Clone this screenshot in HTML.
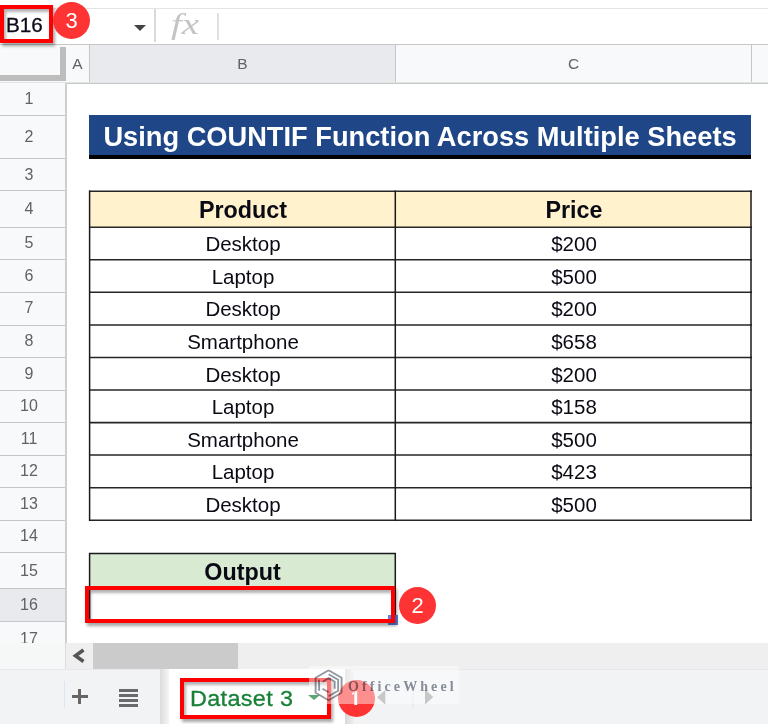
<!DOCTYPE html>
<html><head><meta charset="utf-8">
<style>
html,body{margin:0;padding:0;}
body{width:768px;height:724px;position:relative;overflow:hidden;background:#fff;font-family:"Liberation Sans",sans-serif;}
.a{position:absolute;}
.hl{position:absolute;height:1px;background:#c4c7c5;}
.vl{position:absolute;width:1px;background:#c4c7c5;}
.rh{position:absolute;left:0;width:58px;text-align:center;font-size:16px;color:#5f6368;}
.ch{position:absolute;top:44.8px;height:37px;line-height:37px;text-align:center;font-size:15.5px;color:#5f6368;}
.cell{position:absolute;text-align:center;font-size:20.5px;color:#0a0a14;white-space:nowrap;}
.redbox{position:absolute;box-sizing:border-box;border:4px solid #ff0000;box-shadow:2px 3px 3px rgba(0,0,0,.35), inset 2px 3px 3px rgba(0,0,0,.3);}
.circ{position:absolute;width:37px;height:37px;border-radius:50%;background:#fe3434;color:#fff;text-align:center;font-size:22px;line-height:37px;}
</style></head><body>
<div class="hl" style="left:0;top:8px;width:768px;background:#e3e3e3;"></div>
<div class="hl" style="left:0;top:44px;width:768px;background:#c7c7c7;"></div>
<div class="a" style="left:6px;top:12px;font-size:20.7px;line-height:26px;color:#0b0b1a;-webkit-text-stroke:0.3px #0b0b1a;">B16</div>
<div class="a" style="left:133.5px;top:24.5px;width:0;height:0;border-left:6px solid transparent;border-right:6px solid transparent;border-top:6.5px solid #444;"></div>
<div class="a" style="left:154px;top:9px;width:2px;height:33px;background:#d9d9d9;"></div>
<div class="a" style="left:171px;top:6px;font-family:'Liberation Serif',serif;font-style:italic;font-size:30px;line-height:36px;color:#c4c4c4;transform:scaleX(1.3);transform-origin:0 0;">fx</div>
<div class="a" style="left:217px;top:13px;width:2px;height:27px;background:#e0e0e0;"></div>
<div class="a" style="left:0;top:45px;width:768px;height:37px;background:#f8f9fa;"></div>
<div class="a" style="left:90px;top:45px;width:305px;height:37px;background:#e8eaed;"></div>
<div class="a" style="left:60px;top:46.5px;width:6px;height:34px;background:#bdbdbd;"></div>
<div class="a" style="left:0;top:75px;width:66px;height:6px;background:#bdbdbd;"></div>
<div class="hl" style="left:0;top:82px;width:768px;background:#e2e4e4;"></div>
<div class="hl" style="left:0;top:83px;width:768px;background:#c8caca;"></div>
<div class="vl" style="left:89px;top:45px;height:37px;"></div>
<div class="vl" style="left:395px;top:45px;height:37px;"></div>
<div class="vl" style="left:751px;top:45px;height:37px;"></div>
<div class="ch" style="left:66px;width:23px;">A</div>
<div class="ch" style="left:90px;width:305px;">B</div>
<div class="ch" style="left:396px;width:355px;">C</div>
<div class="a" style="left:0;top:83px;width:65px;height:560px;background:#f8f9fa;"></div>
<div class="a" style="left:0;top:589px;width:65px;height:32px;background:#e8eaed;"></div>
<div class="vl" style="left:65px;top:83px;height:560px;width:2px;background:#cdd0cf;"></div>
<div class="hl" style="left:0;top:115px;width:65px;"></div>
<div class="rh" style="top:82.7px;height:32.7px;line-height:32.7px;">1</div>
<div class="hl" style="left:0;top:158px;width:65px;"></div>
<div class="rh" style="top:115.4px;height:43.099999999999994px;line-height:43.099999999999994px;">2</div>
<div class="hl" style="left:0;top:190px;width:65px;"></div>
<div class="rh" style="top:158.5px;height:32.0px;line-height:32.0px;">3</div>
<div class="hl" style="left:0;top:227px;width:65px;"></div>
<div class="rh" style="top:190.5px;height:36.900000000000006px;line-height:36.900000000000006px;">4</div>
<div class="hl" style="left:0;top:259px;width:65px;"></div>
<div class="rh" style="top:227.4px;height:32.400000000000006px;line-height:32.400000000000006px;">5</div>
<div class="hl" style="left:0;top:292px;width:65px;"></div>
<div class="rh" style="top:259.8px;height:32.5px;line-height:32.5px;">6</div>
<div class="hl" style="left:0;top:325px;width:65px;"></div>
<div class="rh" style="top:292.3px;height:32.69999999999999px;line-height:32.69999999999999px;">7</div>
<div class="hl" style="left:0;top:357px;width:65px;"></div>
<div class="rh" style="top:325px;height:32.5px;line-height:32.5px;">8</div>
<div class="hl" style="left:0;top:390px;width:65px;"></div>
<div class="rh" style="top:357.5px;height:32.80000000000001px;line-height:32.80000000000001px;">9</div>
<div class="hl" style="left:0;top:422px;width:65px;"></div>
<div class="rh" style="top:390.3px;height:32.30000000000001px;line-height:32.30000000000001px;">10</div>
<div class="hl" style="left:0;top:455px;width:65px;"></div>
<div class="rh" style="top:422.6px;height:32.39999999999998px;line-height:32.39999999999998px;">11</div>
<div class="hl" style="left:0;top:487px;width:65px;"></div>
<div class="rh" style="top:455px;height:32.80000000000001px;line-height:32.80000000000001px;">12</div>
<div class="hl" style="left:0;top:520px;width:65px;"></div>
<div class="rh" style="top:487.8px;height:32.49999999999994px;line-height:32.49999999999994px;">13</div>
<div class="hl" style="left:0;top:552px;width:65px;"></div>
<div class="rh" style="top:520.3px;height:32.40000000000009px;line-height:32.40000000000009px;">14</div>
<div class="hl" style="left:0;top:588px;width:65px;"></div>
<div class="rh" style="top:552.7px;height:36.19999999999993px;line-height:36.19999999999993px;">15</div>
<div class="hl" style="left:0;top:621px;width:65px;"></div>
<div class="rh" style="top:588.9px;height:32.700000000000045px;line-height:32.700000000000045px;">16</div>
<div class="hl" style="left:0;top:660px;width:65px;"></div>
<div class="rh" style="top:621.6px;height:33.89999999999998px;line-height:33.89999999999998px;">17</div>
<div class="a" style="left:89px;top:115px;width:662px;height:40px;background:#1f4788;color:#fff;"></div>
<div class="a" style="left:89px;top:117px;width:662px;height:40px;color:#fff;font-weight:bold;font-size:28px;line-height:40px;text-align:center;white-space:nowrap;transform:scaleX(0.973);">Using COUNTIF Function Across Multiple Sheets</div>
<div class="a" style="left:89px;top:155px;width:662px;height:4px;background:#000;"></div>
<div class="a" style="left:89px;top:190.5px;width:662px;height:37px;background:#fff2cc;"></div>
<div class="cell" style="left:90px;top:190.5px;width:306px;height:36.900000000000006px;line-height:36.900000000000006px;font-weight:bold;font-size:23.3px;padding-top:1px;">Product</div>
<div class="cell" style="left:396px;top:190.5px;width:356px;height:36.900000000000006px;line-height:36.900000000000006px;font-weight:bold;font-size:23.3px;padding-top:1px;">Price</div>
<div class="cell" style="left:90px;top:227.4px;width:306px;height:32.400000000000006px;line-height:32.400000000000006px;padding-top:1px;">Desktop</div>
<div class="cell" style="left:396px;top:227.4px;width:356px;height:32.400000000000006px;line-height:32.400000000000006px;padding-top:1px;">$200</div>
<div class="cell" style="left:90px;top:259.8px;width:306px;height:32.5px;line-height:32.5px;padding-top:1px;">Laptop</div>
<div class="cell" style="left:396px;top:259.8px;width:356px;height:32.5px;line-height:32.5px;padding-top:1px;">$500</div>
<div class="cell" style="left:90px;top:292.3px;width:306px;height:32.69999999999999px;line-height:32.69999999999999px;padding-top:1px;">Desktop</div>
<div class="cell" style="left:396px;top:292.3px;width:356px;height:32.69999999999999px;line-height:32.69999999999999px;padding-top:1px;">$200</div>
<div class="cell" style="left:90px;top:325px;width:306px;height:32.5px;line-height:32.5px;padding-top:1px;">Smartphone</div>
<div class="cell" style="left:396px;top:325px;width:356px;height:32.5px;line-height:32.5px;padding-top:1px;">$658</div>
<div class="cell" style="left:90px;top:357.5px;width:306px;height:32.80000000000001px;line-height:32.80000000000001px;padding-top:1px;">Desktop</div>
<div class="cell" style="left:396px;top:357.5px;width:356px;height:32.80000000000001px;line-height:32.80000000000001px;padding-top:1px;">$200</div>
<div class="cell" style="left:90px;top:390.3px;width:306px;height:32.30000000000001px;line-height:32.30000000000001px;padding-top:1px;">Laptop</div>
<div class="cell" style="left:396px;top:390.3px;width:356px;height:32.30000000000001px;line-height:32.30000000000001px;padding-top:1px;">$158</div>
<div class="cell" style="left:90px;top:422.6px;width:306px;height:32.39999999999998px;line-height:32.39999999999998px;padding-top:1px;">Smartphone</div>
<div class="cell" style="left:396px;top:422.6px;width:356px;height:32.39999999999998px;line-height:32.39999999999998px;padding-top:1px;">$500</div>
<div class="cell" style="left:90px;top:455px;width:306px;height:32.80000000000001px;line-height:32.80000000000001px;padding-top:1px;">Laptop</div>
<div class="cell" style="left:396px;top:455px;width:356px;height:32.80000000000001px;line-height:32.80000000000001px;padding-top:1px;">$423</div>
<div class="cell" style="left:90px;top:487.8px;width:306px;height:32.49999999999994px;line-height:32.49999999999994px;padding-top:1px;">Desktop</div>
<div class="cell" style="left:396px;top:487.8px;width:356px;height:32.49999999999994px;line-height:32.49999999999994px;padding-top:1px;">$500</div>
<svg class="a" style="left:0;top:0" width="768" height="724"><line x1="89" y1="191.2" x2="752" y2="191.2" stroke="#262626" stroke-width="1.6"/><line x1="89" y1="227.3" x2="752" y2="227.3" stroke="#262626" stroke-width="1.6"/><line x1="89" y1="259.8" x2="752" y2="259.8" stroke="#262626" stroke-width="1.6"/><line x1="89" y1="292.3" x2="752" y2="292.3" stroke="#262626" stroke-width="1.6"/><line x1="89" y1="325" x2="752" y2="325" stroke="#262626" stroke-width="1.6"/><line x1="89" y1="357.5" x2="752" y2="357.5" stroke="#262626" stroke-width="1.6"/><line x1="89" y1="390" x2="752" y2="390" stroke="#262626" stroke-width="1.6"/><line x1="89" y1="422.6" x2="752" y2="422.6" stroke="#262626" stroke-width="1.6"/><line x1="89" y1="455" x2="752" y2="455" stroke="#262626" stroke-width="1.6"/><line x1="89" y1="487.8" x2="752" y2="487.8" stroke="#262626" stroke-width="1.6"/><line x1="89" y1="520.3" x2="752" y2="520.3" stroke="#262626" stroke-width="1.6"/><line x1="89.6" y1="190.4" x2="89.6" y2="521.1" stroke="#1a1a1a" stroke-width="1.5"/><line x1="395.3" y1="190.4" x2="395.3" y2="521.1" stroke="#1a1a1a" stroke-width="1.5"/><line x1="751" y1="190.4" x2="751" y2="521.1" stroke="#1a1a1a" stroke-width="1.5"/></svg>
<div class="a" style="left:89px;top:553px;width:306px;height:36px;background:#d9ead3;"></div>
<svg class="a" style="left:0;top:0" width="768" height="724"><path d="M89.6 621.6 V553.6 H395.3 V621.6 Z M89.6 589 H395.3" fill="none" stroke="#1a1a1a" stroke-width="1.5"/></svg>
<div class="cell" style="left:89.5px;top:553.8px;width:306px;height:36px;line-height:36px;font-weight:bold;font-size:23.3px;">Output</div>
<div class="a" style="left:388px;top:615px;width:10px;height:10px;background:#5b80e0;"></div>
<div class="redbox" style="left:85px;top:586px;width:310px;height:37px;"></div>
<div class="circ" style="left:399px;top:587px;">2</div>
<div class="redbox" style="left:0;top:5px;width:52.5px;height:38px;"></div>
<div class="circ" style="left:53px;top:2px;">3</div>
<div class="a" style="left:0;top:643px;width:768px;height:26px;background:#efefef;"></div>
<div class="a" style="left:0;top:643px;width:65px;height:26px;background:#f6f8f8;"></div>
<div class="a" style="left:65px;top:643px;width:1px;height:26px;background:#dcdcdc;"></div>
<div class="a" style="left:66px;top:643px;width:27px;height:26px;background:#efefef;"></div>
<div class="a" style="left:93px;top:643px;width:145px;height:26px;background:#cbcbcb;"></div>
<svg class="a" style="left:0;top:0" width="768" height="724"><path d="M83.5 650 L75.5 655.8 L83.5 661.5" fill="none" stroke="#555" stroke-width="3.6" stroke-linejoin="miter"/></svg>
<div class="a" style="left:0;top:669px;width:768px;height:55px;background:#f1f3f4;"></div>
<div class="a" style="left:0;top:669px;width:768px;height:1px;background:#e6e8eb;"></div>
<div class="a" style="left:160px;top:669px;width:9px;height:55px;background:linear-gradient(to right,#dcdcdc,#f5f5f5);"></div>
<div class="a" style="left:169px;top:669px;width:176px;height:55px;background:#fff;"></div>
<div class="a" style="left:345px;top:669px;width:9px;height:55px;background:linear-gradient(to right,#d8d8d8,#eeeeee);"></div>
<div class="a" style="left:64px;top:681px;width:1px;height:27px;background:#dbe5f3;"></div>
<div class="a" style="left:71.5px;top:694.5px;width:16px;height:3px;background:#666;"></div>
<div class="a" style="left:78px;top:688.5px;width:3px;height:15px;background:#666;"></div>
<div class="a" style="left:119px;top:689px;width:19px;height:3px;background:#6a6a6a;"></div>
<div class="a" style="left:119px;top:694px;width:19px;height:3px;background:#6a6a6a;"></div>
<div class="a" style="left:119px;top:699px;width:19px;height:3px;background:#6a6a6a;"></div>
<div class="a" style="left:119px;top:704px;width:19px;height:3px;background:#6a6a6a;"></div>
<div class="a" style="left:189.5px;top:686px;font-size:21.3px;line-height:26px;letter-spacing:0.3px;color:#188038;-webkit-text-stroke:0.3px #188038;white-space:nowrap;transform:scaleX(1.1);transform-origin:0 0;">Dataset 3</div>
<div class="redbox" style="left:180px;top:678px;width:151px;height:41px;"></div>
<svg class="a" style="left:0;top:0" width="768" height="724"><path d="M385.3 690 V704.5 L377 697.3 Z" fill="#9a9a9a"/><path d="M425 689.5 V704.5 L433.3 697 Z" fill="#9a9a9a"/><line x1="413" y1="692" x2="413" y2="709" stroke="#dbe5f3" stroke-width="1"/></svg>
<div class="circ" style="left:338px;top:680px;"></div>
<div class="a" style="left:309px;top:666px;width:150px;height:38px;background:rgba(255,255,255,.45);"></div>
<svg class="a" style="left:0;top:0" width="768" height="724"><path d="M354.3 691.2 H357.2 V705 H354.3 Z M354.8 691.2 L351.8 693.6 L352.6 694.8 L355.3 693 Z" fill="#fff"/></svg>
<svg class="a" style="left:0;top:0" width="768" height="724"><path d="M315.61 692.70 L315.61 677.70 L328.60 670.20 M315.61 677.70 L315.61 692.70 L328.60 700.20 L341.59 692.70 M328.60 674.20 L338.13 679.70 L338.13 690.70 L328.60 696.20 M328.60 670.20 L341.59 677.70 L341.59 692.70 M319.07 690.70 L319.07 679.70 M322.54 681.70 L328.60 678.20 L334.66 681.70 L334.66 688.70 M322.54 688.70 L328.60 692.20" fill="none" stroke="#7f858f" stroke-width="1.9" opacity=".85" style="mix-blend-mode:multiply"/></svg>
<div class="a" style="left:307.5px;top:695px;width:0;height:0;border-left:6px solid transparent;border-right:6px solid transparent;border-top:5.5px solid #5aa674;"></div>
<div class="a" style="left:348px;top:678px;font-family:'Liberation Serif',serif;font-weight:bold;font-size:14px;line-height:18px;letter-spacing:3.1px;color:#8a909c;mix-blend-mode:multiply;white-space:nowrap;">OfficeWheel</div>
</body></html>
